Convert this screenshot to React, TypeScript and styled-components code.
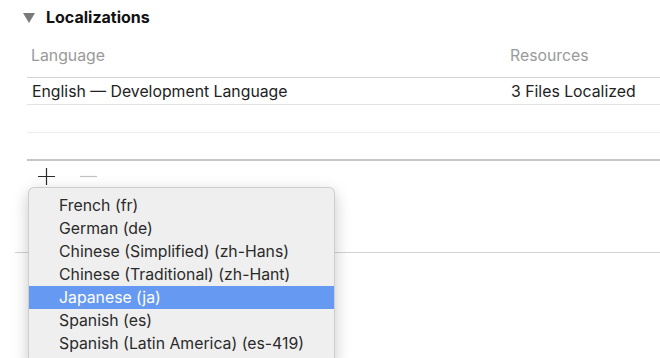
import styled, { createGlobalStyle } from "styled-components";

const GlobalStyle = createGlobalStyle`
  html, body {
    margin: 0;
    padding: 0;
    background: #ffffff;
  }
  body {
    font-family: Inter, "Noto Sans", "Liberation Sans", sans-serif;
    -webkit-font-smoothing: antialiased;
  }
`;

const languages = [
  "French (fr)",
  "German (de)",
  "Chinese (Simplified) (zh-Hans)",
  "Chinese (Traditional) (zh-Hant)",
  "Japanese (ja)",
  "Spanish (es)",
  "Spanish (Latin America) (es-419)",
];

const selected = "Japanese (ja)";

function App() {
  return (
    <>
      <GlobalStyle />
      <Page>
        <TitleRow>
          <Disclosure viewBox="0 0 12 10">
            <path d="M0 0 L12 0 L6 10 Z" fill="#7a7a7a" />
          </Disclosure>
          <Title>Localizations</Title>
        </TitleRow>
        <Table>
          <HeaderRow>
            <HeaderCell>Language</HeaderCell>
            <HeaderCell>Resources</HeaderCell>
          </HeaderRow>
          <Row $height={27}>
            <Cell>English — Development Language</Cell>
            <Cell>3 Files Localized</Cell>
          </Row>
          <Row $height={28} $light>
            <Cell />
            <Cell />
          </Row>
          <Row $height={28} $last>
            <Cell />
            <Cell />
          </Row>
        </Table>
        <Toolbar>
          <ToolButton>
            <svg width="17" height="17" viewBox="0 0 17 17">
              <path d="M8.5 0 V17 M0 8.5 H17" stroke="#2b2b2b" strokeWidth="1.2" />
            </svg>
          </ToolButton>
          <ToolButton>
            <svg width="17" height="17" viewBox="0 0 17 17">
              <path d="M0 8.5 H17" stroke="#c2c2c2" strokeWidth="1.2" />
            </svg>
          </ToolButton>
          <Menu>
            {languages.map((lang) => (
              <MenuItem key={lang} $active={lang === selected}>
                {lang}
              </MenuItem>
            ))}
          </Menu>
        </Toolbar>
        <Separator />
      </Page>
    </>
  );
}

export default App;

const Page = styled.div`
  width: 660px;
  height: 358px;
  overflow: hidden;
  position: relative;
  background: #ffffff;
`;

const TitleRow = styled.div`
  height: 34px;
  display: flex;
  align-items: center;
  padding-left: 23px;
  gap: 11px;
`;

const Disclosure = styled.svg`
  width: 12px;
  height: 10px;
  margin-top: 1px;
`;

const Title = styled.span`
  font-size: 16px;
  font-weight: 700;
  color: #111;
`;

const Table = styled.div`
  margin-left: 27px;
`;

const HeaderRow = styled.div`
  display: grid;
  grid-template-columns: 479px 1fr;
  height: 44px;
  align-items: end;
  padding-bottom: 12px;
  box-sizing: border-box;
  border-bottom: 1px solid #d4d4d4;
`;

const HeaderCell = styled.div`
  padding-left: 4px;
  font-size: 15.8px;
  line-height: 19px;
  color: #9a9a9a;
`;

const Row = styled.div<{ $height: number; $light?: boolean; $last?: boolean }>`
  display: grid;
  grid-template-columns: 479px 1fr;
  align-items: center;
  height: ${(p) => p.$height}px;
  box-sizing: border-box;
  border-bottom: ${(p) =>
    p.$last ? "2px solid #c6c6c6" : p.$light ? "1px solid #ececec" : "1px solid #e2e2e2"};
`;

const Cell = styled.div`
  padding-left: 5px;
  font-size: 15.8px;
  line-height: 19px;
  color: #222;
  white-space: nowrap;
`;

const Toolbar = styled.div`
  position: relative;
  height: 91px;
  display: flex;
  align-items: flex-start;
  padding: 7px 0 0 38px;
  gap: 25px;
  box-sizing: border-box;
`;

const ToolButton = styled.div`
  width: 17px;
  height: 17px;
  display: flex;
`;

const Separator = styled.div`
  margin-left: 15px;
  border-top: 1px solid #d2d2d2;
`;

const Menu = styled.div`
  position: absolute;
  left: 28px;
  top: 26px;
  width: 305px;
  padding: 6px 0 8px;
  background: #efefef;
  border: 1px solid rgba(0, 0, 0, 0.14);
  border-radius: 6px;
  box-shadow: 0 5px 16px rgba(0, 0, 0, 0.22);
  z-index: 2;
`;

const MenuItem = styled.div<{ $active: boolean }>`
  height: 23px;
  line-height: 23px;
  padding-left: 30px;
  font-size: 15.8px;
  color: ${(p) => (p.$active ? "#ffffff" : "#2a2a2a")};
  background: ${(p) => (p.$active ? "#6699f1" : "transparent")};
  white-space: nowrap;
`;
